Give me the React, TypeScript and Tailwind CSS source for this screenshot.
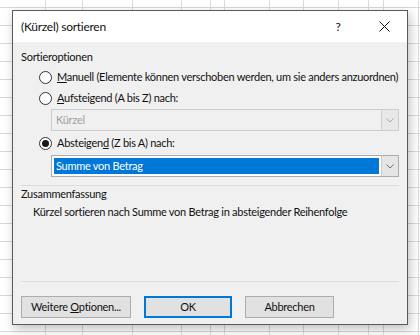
import React from 'react';

const cols = [45, 82, 132, 181, 210, 224, 269, 303, 338, 368, 383, 418];
const rows = Array.from({ length: 19 }, (_, i) => 7 + i * 18);

function SheetGrid() {
  return (
    <svg className="absolute inset-0" width="420" height="335">
      <rect width="420" height="335" fill="#ffffff" />
      {rows.map((y) => (
        <line key={'r' + y} x1="0" x2="420" y1={y + 0.5} y2={y + 0.5} stroke="#d9d9d9" />
      ))}
      {cols.map((x) => (
        <line key={'c' + x} x1={x + 0.5} x2={x + 0.5} y1="0" y2="335" stroke="#d9d9d9" />
      ))}
    </svg>
  );
}

function Radio({ checked }: { checked?: boolean }) {
  return (
    <span className="flex h-[13px] w-[13px] shrink-0 items-center justify-center rounded-full border border-[#333333] bg-white">
      {checked && <span className="h-[7px] w-[7px] rounded-full bg-[#1a1a1a]" />}
    </span>
  );
}

function Chevron({ color }: { color: string }) {
  return (
    <svg width="8" height="5" viewBox="0 0 8 5">
      <path d="M0.5 0.5 L4 4 L7.5 0.5" fill="none" stroke={color} strokeWidth="1" />
    </svg>
  );
}

function Select({ value, disabled }: { value: string; disabled?: boolean }) {
  if (disabled) {
    return (
      <div className="flex h-[22px] border border-[#cccccc] bg-[#f0f0f0]">
        <div className="flex flex-1 items-center pl-[4px] text-[#a0a0a0]">{value}</div>
        <div className="flex w-[17px] items-center justify-center border-l border-[#cccccc] bg-[#e8e8e8]">
          <Chevron color="#a8a8a8" />
        </div>
      </div>
    );
  }
  return (
    <div className="flex h-[22px] border border-[#adadad] bg-white">
      <div className="flex flex-1 p-[2px]">
        <div className="flex flex-1 items-center bg-[#0078d7] pl-[2px] text-white">{value}</div>
      </div>
      <div className="flex w-[17px] items-center justify-center border-l border-[#cccccc] bg-[#e5e5e5]">
        <Chevron color="#707070" />
      </div>
    </div>
  );
}

function Button({ children, primary }: { children: React.ReactNode; primary?: boolean }) {
  return (
    <div
      className={
        primary
          ? 'flex h-[22px] w-[88px] items-center justify-center border-2 border-[#0078d7] bg-[#e1e1e1]'
          : 'flex h-[22px] w-[89px] items-center justify-center border border-[#adadad] bg-[#e1e1e1]'
      }
    >
      {children}
    </div>
  );
}

export default function App() {
  return (
    <div
      className="relative h-[335px] w-[420px] overflow-hidden whitespace-nowrap text-[11px] leading-[16px] tracking-[-0.27px] text-[#111111]"
      style={{ fontFamily: 'Lato, "Noto Sans", sans-serif' }}
    >
      <SheetGrid />

      <div className="absolute left-[12px] top-[10px] flex h-[315px] w-[396px] flex-col border border-[#5a5a5a] bg-[#f0f0f0] shadow-[2px_4px_10px_rgba(0,0,0,0.25)]">
        {/* title bar */}
        <div className="flex h-[31px] items-center bg-white pl-[8px]">
          <span className="flex-1 text-[12px]">(Kürzel) sortieren</span>
          <span className="w-[46px] text-center text-[12px]">?</span>
          <span className="flex w-[46px] items-center justify-center">
            <svg width="11" height="11" viewBox="0 0 11 11">
              <path d="M0.5 0.5 L10.5 10.5 M10.5 0.5 L0.5 10.5" stroke="#111" strokeWidth="1" />
            </svg>
          </span>
        </div>

        <div className="flex flex-1 flex-col px-[8px] pt-[7px]">
          <div>Sortieroptionen</div>

          <div className="mt-[2px] flex flex-col pl-[18px]">
            <label className="flex h-[20px] items-center gap-[5px]">
              <Radio />
              <span>
                <span className="underline">M</span>anuell (Elemente können verschoben werden, um sie anders anzuordnen)
              </span>
            </label>
            <label className="mt-[1px] flex h-[20px] items-center gap-[5px]">
              <Radio />
              <span>
                <span className="underline">A</span>ufsteigend (A bis Z) nach:
              </span>
            </label>
            <div className="mt-[1px] pl-[12px]">
              <Select value="Kürzel" disabled />
            </div>
            <label className="mt-[2px] flex h-[20px] items-center gap-[5px]">
              <Radio checked />
              <span>
                Absteigen<span className="underline">d</span> (Z bis A) nach:
              </span>
            </label>
            <div className="mt-[2px] pl-[12px]">
              <Select value="Summe von Betrag" />
            </div>
          </div>

          <div className="mt-[8px] border-t border-[#dcdcdc]">Zusammenfassung</div>
          <div className="mt-[2px] pl-[12px]">Kürzel sortieren nach Summe von Betrag in absteigender Reihenfolge</div>

          <div className="mt-auto border-t border-[#dcdcdc]" />
          <div className="flex gap-[13px] pb-[6px] pt-[14px]">
            <div className="flex h-[22px] w-[110px] items-center justify-center border border-[#adadad] bg-[#e1e1e1]">
              Weitere&nbsp;<span className="underline">O</span>ptionen...
            </div>
            <Button primary>OK</Button>
            <Button>Abbrechen</Button>
          </div>
        </div>
      </div>
    </div>
  );
}
